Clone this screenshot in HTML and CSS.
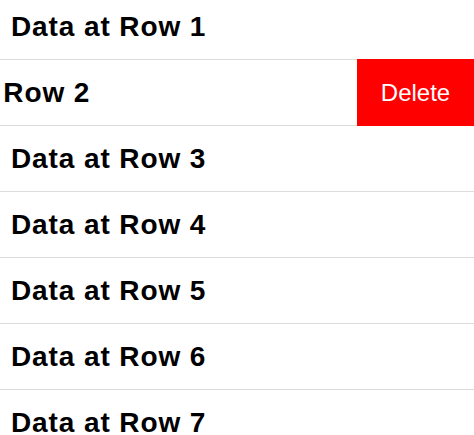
FILE: index.html
```html
<html lang="en">
<head>
    <meta charset="utf-8">
    <title>Table</title>
    <link rel="stylesheet" href="styles.css">
</head>
<body>
<div class="list">
    <div class="row"><div class="label">Data at Row 1</div></div>
    <div class="row open">
        <div class="label">Data at Row 2</div>
        <div class="delete">Delete</div>
    </div>
    <div class="row"><div class="label">Data at Row 3</div></div>
    <div class="row"><div class="label">Data at Row 4</div></div>
    <div class="row"><div class="label">Data at Row 5</div></div>
    <div class="row"><div class="label">Data at Row 6</div></div>
    <div class="row"><div class="label">Data at Row 7</div></div>
</div>
</body>
</html>
```
FILE: styles.css
```css
*{
    padding: 0;
    margin: 0;
}
html,body{
    height: 100%;
    overflow: hidden;
    background-color: #ffffff;
}
.list{
    margin-top: -6px;
    font-family: "Liberation Sans", Arial, sans-serif;
}
.row{
    display: flex;
    height: 65px;
    border-bottom: 1px solid #dcdcdc;
    background-color: #ffffff;
}
.label{
    flex: 1;
    display: flex;
    align-items: center;
    padding-left: 11px;
    font-size: 28px;
    font-weight: bold;
    letter-spacing: 0.9px;
    color: #000000;
    white-space: nowrap;
}
.open .label{
    margin-left: -116px;
}
.delete{
    display: flex;
    align-items: center;
    justify-content: center;
    width: 117px;
    margin: -1px 0;
    background-color: #ff0000;
    color: #ffffff;
    font-size: 24px;
}
```
